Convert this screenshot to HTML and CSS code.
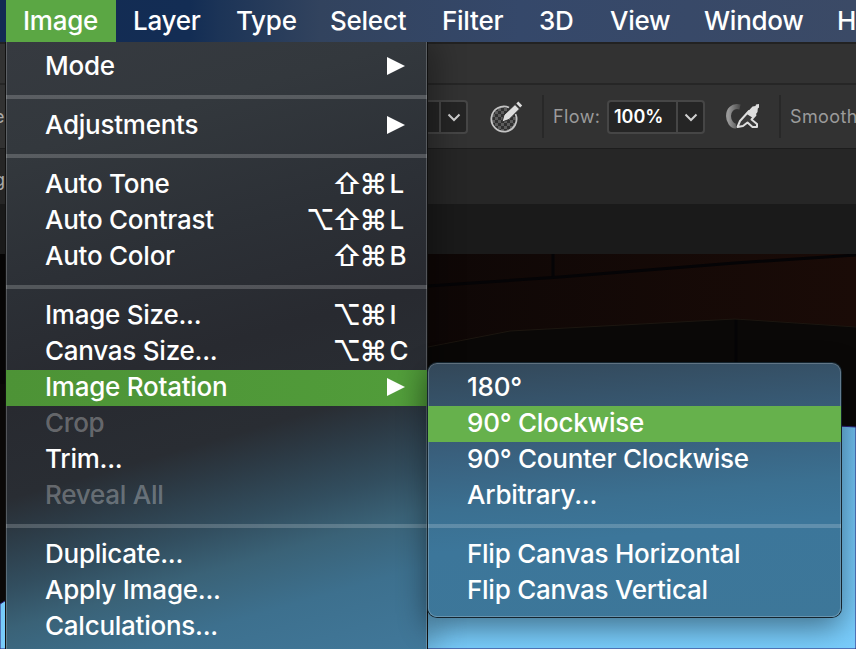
FILE: index.html
```
<!DOCTYPE html>
<html lang="en">
<head>
  <meta charset="UTF-8">
  <meta name="viewport" content="width=device-width, initial-scale=1.0">
  <title>Image Rotation</title>
  <link rel="stylesheet" href="styles.css">
</head>
<body>

  <nav class="menubar">
    <span class="menubar-item active">Image</span>
    <span class="menubar-item layer">Layer</span>
    <span class="menubar-item type">Type</span>
    <span class="menubar-item select">Select</span>
    <span class="menubar-item filter">Filter</span>
    <span class="menubar-item three-d">3D</span>
    <span class="menubar-item view">View</span>
    <span class="menubar-item window">Window</span>
    <span class="menubar-item">H</span>
  </nav>

  <div class="titlebar"></div>

  <div class="options">
    <span class="cut-text">e</span>
    <div class="field opacity">
      <span class="field-value"></span>
      <span class="field-arrow"><svg width="14" height="9" viewBox="0 0 14 9"><path d="M1.5 1.5L7 7L12.5 1.5"/></svg></span>
    </div>
    <svg class="icon pressure" width="34" height="34" viewBox="0 0 34 34">
      <defs>
        <pattern id="checker" width="6" height="6" patternUnits="userSpaceOnUse">
          <rect width="6" height="6" fill="#303030"/>
          <rect width="3" height="3" fill="#5c5c5c"/>
          <rect x="3" y="3" width="3" height="3" fill="#5c5c5c"/>
        </pattern>
      </defs>
      <circle cx="15" cy="20" r="12.5" fill="url(#checker)"/>
      <path d="M20 8.5A12.6 12.6 0 1 0 26.5 15" fill="none" stroke="#c4c4c4" stroke-width="1.8"/>
      <path d="M13 23L15 16L26 5.5L30.5 10L20 20.5Z" fill="#dedede" stroke="#303030" stroke-width="1"/>
      <path d="M27.3 4.5L29.3 2.5L33.2 6.5L31.2 8.5Z" fill="#dedede"/>
    </svg>
    <span class="divider"></span>
    <span class="label flow">Flow:</span>
    <div class="field">
      <span class="field-value">100%</span>
      <span class="field-arrow"><svg width="14" height="9" viewBox="0 0 14 9"><path d="M1.5 1.5L7 7L12.5 1.5"/></svg></span>
    </div>
    <svg class="icon airbrush" width="36" height="28" viewBox="0 0 36 28">
      <defs>
        <linearGradient id="fade">
          <stop offset="0" stop-color="#999"/>
          <stop offset="1" stop-color="#4a4a4a"/>
        </linearGradient>
      </defs>
      <path d="M15 5C7 3 3.5 9 3.5 14S7 24.5 11 24" fill="none" stroke="url(#fade)" stroke-width="5"/>
      <path d="M12.5 25L15 19L24 9L30.5 13L26.5 17.5L32 22V25H27.5L22.5 20.5L18 24Z" fill="#3a3a3a" stroke="#dedede" stroke-width="2" stroke-linejoin="round"/>
      <path d="M21 11.5L27.5 4.5L30.5 4L31 2.5L34 2V5.5L32.8 6.5L32.5 10L28 16Z" fill="#dedede"/>
    </svg>
    <span class="divider second"></span>
    <span class="label smooth">Smooth</span>
  </div>

  <div class="tabs"><span class="cut-text">g</span></div>
  <div class="ruler"></div>

  <main class="canvas">
    <svg width="856" height="395" viewBox="0 0 856 395">
      <defs>
        <linearGradient id="wall" x1="0" y1="0" x2="1" y2="0">
          <stop offset="0" stop-color="#060505"/>
          <stop offset="0.5" stop-color="#0e0706"/>
          <stop offset="1" stop-color="#1a0b07"/>
        </linearGradient>
        <linearGradient id="sky" x1="0" y1="0" x2="0" y2="1">
          <stop offset="0" stop-color="#6dbcec"/>
          <stop offset="1" stop-color="#79cdfc"/>
        </linearGradient>
      </defs>
      <rect width="856" height="395" fill="url(#wall)"/>
      <path d="M0 130L428 93L510 77L735 65L856 73V395H0Z" fill="#0a0807"/>
      <path d="M428 93L510 77L735 65L856 73" fill="none" stroke="#1c1610" stroke-width="1"/>
      <path d="M428 32L560 23L735 9L856 1M553 0V22M736 66V110" fill="none" stroke="#050406" stroke-width="3"/>
      <path d="M0 350Q200 220 428 190T820 171L856 173V395H0Z" fill="url(#sky)" stroke="#2b1d78" stroke-width="1"/>
    </svg>
  </main>

  <!-- Image menu -->
  <div class="menu image-menu">
    <div class="item">Mode <i class="arrow"></i></div>
    <hr>
    <div class="item">Adjustments <i class="arrow"></i></div>
    <hr>
    <div class="item">Auto Tone <span class="keys"><b>⇧</b><b>⌘</b><b>L</b></span></div>
    <div class="item">Auto Contrast <span class="keys"><b>⌥</b><b>⇧</b><b>⌘</b><b>L</b></span></div>
    <div class="item">Auto Color <span class="keys"><b>⇧</b><b>⌘</b><b>B</b></span></div>
    <hr>
    <div class="item">Image Size... <span class="keys"><b>⌥</b><b>⌘</b><b>I</b></span></div>
    <div class="item">Canvas Size... <span class="keys"><b>⌥</b><b>⌘</b><b>C</b></span></div>
    <div class="item selected">Image Rotation <i class="arrow"></i></div>
    <div class="item disabled">Crop</div>
    <div class="item">Trim...</div>
    <div class="item disabled">Reveal All</div>
    <hr>
    <div class="item">Duplicate...</div>
    <div class="item">Apply Image...</div>
    <div class="item">Calculations...</div>
  </div>

  <!-- Image Rotation submenu -->
  <div class="menu submenu">
    <div class="item">180°</div>
    <div class="item selected">90° Clockwise</div>
    <div class="item">90° Counter Clockwise</div>
    <div class="item">Arbitrary...</div>
    <hr>
    <div class="item">Flip Canvas Horizontal</div>
    <div class="item">Flip Canvas Vertical</div>
  </div>

</body>
</html>
```
FILE: styles.css
```
* {
  box-sizing: border-box;
}

body {
  margin: 0;
  position: relative;
  width: 856px;
  height: 649px;
  overflow: hidden;
  background-color: #323232;
  color: #fff;
  font-family: Inter, "Liberation Sans", sans-serif;
}

.menubar {
  display: flex;
  height: 42px;
  padding-left: 6px;
  overflow: hidden;
  background: linear-gradient(90deg, #132b53 0, #132d54 190px, #1c3457 220px, #32435e 320px, #35486a 520px, #3b4a66 100%);
  font-size: 26px;
  font-weight: 500;
  letter-spacing: -0.25px;
  line-height: 42px;
  white-space: nowrap;
}

.menubar-item {
  flex: none;
  padding-left: 17px;
}

.menubar-item.active {
  width: 110px;
  background-color: #5ba744;
}

.layer { width: 103px; }
.type { width: 94px; }
.select { width: 112px; }
.filter { width: 97px; }
.three-d { width: 71px; }
.view { width: 94px; }
.window { width: 133px; }

.titlebar {
  height: 43px;
  border-top: 2px solid #222;
  border-bottom: 2px solid #262626;
}

.options {
  display: flex;
  align-items: center;
  height: 63px;
  overflow: hidden;
  font-size: 18px;
}

.cut-text {
  width: 6px;
  margin-left: -6px;
  color: #aaa;
  font-size: 18px;
}

.field {
  display: flex;
  flex: none;
  width: 98px;
  height: 34px;
  border: 2px solid #464646;
  border-radius: 4px;
  background-color: #252525;
  font-weight: 600;
  line-height: 30px;
}

.field-value {
  flex: 1;
  padding-left: 5px;
}

.field-arrow {
  display: flex;
  align-items: center;
  justify-content: center;
  width: 27px;
  padding-top: 2px;
  border-left: 2px solid #464646;
}

.field-arrow path {
  fill: none;
  stroke: #d0d0d0;
  stroke-width: 2;
}

.opacity {
  margin-left: 370px;
}

.icon {
  flex: none;
}

.pressure {
  margin: 0 0 2px 21px;
}

.divider {
  flex: none;
  width: 2px;
  height: 43px;
  margin-left: 19px;
  background-color: #282828;
}

.label {
  color: #9b9b9b;
  letter-spacing: 0.4px;
  white-space: nowrap;
}

.flow {
  flex: none;
  width: 63px;
  padding-left: 9px;
}

.airbrush {
  margin: 0 0 2px 20px;
}

.divider.second {
  margin-left: 18px;
}

.smooth {
  padding-left: 9px;
}

.tabs {
  height: 56px;
  padding-top: 20px;
  border-top: 1px solid #1d1d1d;
  background-color: #262626;
  line-height: 22px;
}

.tabs .cut-text {
  display: block;
}

.ruler {
  height: 50px;
  background-color: #1a1a1a;
}

.canvas svg {
  display: block;
}

.menu {
  position: absolute;
  font-size: 26px;
  font-weight: 500;
  letter-spacing: -0.25px;
}

.image-menu {
  top: 42px;
  left: 6px;
  width: 421px;
  height: 607px;
  padding-top: 7px;
  background: linear-gradient(164deg, #363a40 0, #33383d 110px, #2c3036 240px, #282a30 350px, #292d33 440px, #2c3a45 475px, #324e5f 525px, #3a6277 565px, #3d708e 620px, #41789a 700px);
  box-shadow: 0 0 0 1px #111, inset 1px 0 rgba(255, 255, 255, 0.2), inset -1px 0 rgba(255, 255, 255, 0.2), 8px 0 30px rgba(0, 0, 0, 0.35);
  clip-path: inset(0 -40px 0 -1px);
}

.submenu {
  top: 363px;
  left: 428px;
  width: 413px;
  height: 254px;
  padding-top: 7px;
  border-radius: 9px;
  background: linear-gradient(175deg, #334758 0, #36536a 45px, #395f7c 90px, #3b7091 150px, #3c769a 190px, #3d7799 100%);
  box-shadow: 0 0 0 1px #14242e, inset 0 0 0 1px rgba(255, 255, 255, 0.22), 0 10px 30px rgba(0, 0, 0, 0.45);
}

.item {
  display: flex;
  align-items: center;
  justify-content: space-between;
  height: 36px;
  padding-left: 39px;
  line-height: 32px;
  padding-bottom: 2px;
  white-space: nowrap;
}

.item.selected {
  background: linear-gradient(90deg, #4d9336, #519c3a 94%, #4a9035);
}

.submenu .selected {
  background: #66b14c;
}

.item.disabled {
  color: rgba(255, 255, 255, 0.3);
}

.menu hr {
  height: 4px;
  margin: 10px 0 9px;
  border: 0;
  background-color: rgba(255, 255, 255, 0.19);
}

.arrow {
  width: 0;
  height: 0;
  margin-right: 22px;
  border: solid transparent;
  border-width: 9.5px 0 9.5px 18px;
  border-left-color: #fff;
}

.keys {
  display: flex;
  padding-right: 14px;
}

.keys b {
  display: flex;
  justify-content: center;
  width: 26.5px;
  font-size: 28px;
  font-weight: 500;
}

.keys b:last-child {
  justify-content: flex-start;
  padding-left: 3px;
  font-size: 26px;
}
```
